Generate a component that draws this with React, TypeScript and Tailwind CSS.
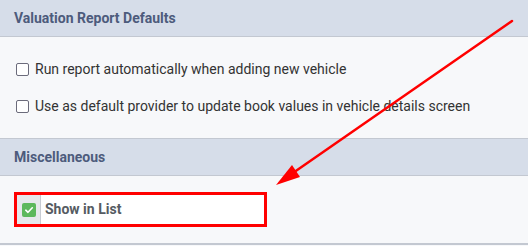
import React from "react";

function Box() {
  return <span className="inline-block w-[13px] h-[13px] rounded-[2px] border-[1.5px] border-[#6b6b7b] bg-white shrink-0" />;
}

export default function App() {
  return (
    <div className="relative w-[528px] h-[246px] bg-[#f7f8fa] overflow-hidden" style={{ fontFamily: "Roboto, 'Liberation Sans', sans-serif" }}>
      <div className="h-[37px] bg-[#d6dde9] border-b border-[#c3c8d1] flex items-center pl-[14px]">
        <span className="text-[14px] font-bold text-[#4d5b7c]">Valuation Report Defaults</span>
      </div>
      <div className="h-[102px] border-b border-[#c3c8d1] flex flex-col pl-[16px] pt-[26px] gap-[24px]">
        <div className="flex items-center gap-[6px] h-[13px]">
          <Box />
          <span className="text-[14px] text-[#333]">Run report automatically when adding new vehicle</span>
        </div>
        <div className="flex items-center gap-[6px] h-[13px]">
          <Box />
          <span className="text-[14px] text-[#333]">Use as default provider to update book values in vehicle details screen</span>
        </div>
      </div>
      <div className="h-[37px] bg-[#d6dde9] border-b border-[#c3c8d1] flex items-center pl-[14px]">
        <span className="text-[14px] font-bold text-[#4d5b7c]">Miscellaneous</span>
      </div>
      <div className="h-[69px] border-b-2 border-[#c3c8d1] pl-[14px] pt-[16px]">
        <div className="flex w-[253px] h-[35px] border-[3px] border-[#ff0000] bg-white">
          <div className="w-[24px] bg-[#e6e8ec] border-r border-[#c8ccd3] flex items-center justify-center">
            <span className="w-[14px] h-[14px] rounded-[2px] bg-[#5cb85c] flex items-center justify-center">
              <svg width="10" height="10" viewBox="0 0 10 10"><path d="M1.8 5.2 L4 7.3 L8.3 2.8" fill="none" stroke="white" strokeWidth="1.6" strokeLinecap="round" strokeLinejoin="round" /></svg>
            </span>
          </div>
          <div className="flex items-center pl-[4px]">
            <span className="text-[14px] font-bold text-[#555b62]">Show in List</span>
          </div>
        </div>
      </div>
      <svg className="absolute left-0 top-0 pointer-events-none" width="528" height="246" viewBox="0 0 528 246">
        <line x1="512" y1="21" x2="290" y2="175" stroke="#ff0000" strokeWidth="2.5" strokeLinecap="round" />
        <polygon points="276,185 292,165 300,177" fill="#ff0000" />
      </svg>
    </div>
  );
}
